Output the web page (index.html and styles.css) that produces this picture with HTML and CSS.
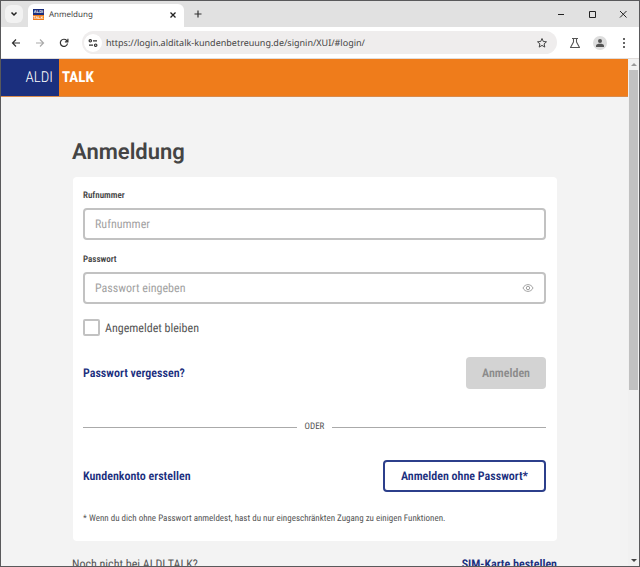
FILE: index.html
```html
<!DOCTYPE html>
<html lang="de">
<head>
<meta charset="utf-8">
<meta name="viewport" content="width=device-width, initial-scale=1">
<title>Anmeldung</title>
<link rel="stylesheet" href="styles.css">
</head>
<body>
<div class="window">
  <div class="tabstrip">
    <button class="tab-search" aria-label="Tabs durchsuchen"><svg width="8" height="8" viewBox="0 0 8 8"><path d="M1.5 2.5 4 5l2.500-2.500" fill="none" stroke="#222" stroke-width="1.500"/></svg></button>
    <div class="tab">
      <span class="favicon"><span class="favicon-top">ALDI</span><span class="favicon-bottom">TALK</span></span>
      <span class="tab-title">Anmeldung</span>
      <button class="icon-button" aria-label="Tab schließen"><svg width="8" height="8" viewBox="0 0 8 8"><path d="M1.500 1.500l5 5m0-5l-5 5" stroke="#222" stroke-width="1.300"/></svg></button>
    </div>
    <button class="icon-button new-tab" aria-label="Neuer Tab"><svg width="8" height="8" viewBox="0 0 8 8"><path d="M4 .5v7M.5 4h7" stroke="#333" stroke-width="1.200"/></svg></button>
    <div class="window-controls">
      <button class="icon-button" aria-label="Minimieren"><svg width="8" height="8" viewBox="0 0 8 8"><path d="M1 4.500h6" stroke="#222"/></svg></button>
      <button class="icon-button" aria-label="Maximieren"><svg width="8" height="8" viewBox="0 0 8 8"><path d="M1.500 1.500h6v6h-6z" fill="none" stroke="#222"/></svg></button>
      <button class="icon-button" aria-label="Schließen"><svg width="8" height="8" viewBox="0 0 8 8"><path d="M1 1l6.500 6.500M7.500 1L1 7.500" stroke="#222"/></svg></button>
    </div>
  </div>
  <div class="toolbar">
    <div class="nav">
      <button class="icon-button" aria-label="Zurück"><svg width="10" height="10" viewBox="0 0 10 10"><path d="M9 5H1.500M5 1.500L1.500 5 5 8.500" fill="none" stroke="#333" stroke-width="1.200"/></svg></button>
      <button class="icon-button" aria-label="Vor"><svg width="10" height="10" viewBox="0 0 10 10"><path d="M1 5h7.500M5 1.500L8.500 5 5 8.500" fill="none" stroke="#aaa" stroke-width="1.200"/></svg></button>
      <button class="icon-button" aria-label="Neu laden"><svg width="10" height="10" viewBox="0 0 10 10"><path d="M8.500 5.500A3.600 3.600 0 1 1 7.700 2.500L8.700 3.600M8.900.8v3H5.900" fill="none" stroke="#333" stroke-width="1.200"/></svg></button>
    </div>
    <div class="address">
      <button class="site-info" aria-label="Websiteinformationen"><svg width="10" height="10" viewBox="0 0 10 10"><g fill="none" stroke="#333" stroke-width="1.200"><circle cx="2.300" cy="2.800" r="1.200"/><path d="M5 2.800h4M1 7.200h4"/><circle cx="7.700" cy="7.200" r="1.200"/></g></svg></button>
      <input class="url" type="text" aria-label="Adresse" value="https://login.alditalk-kundenbetreuung.de/signin/XUI/#login/">
      <button class="icon-button" aria-label="Lesezeichen"><svg width="12" height="12" viewBox="0 0 12 12"><path d="M6 1.500l1.300 3 3.200.3-2.400 2.100.7 3.200L6 8.400l-2.800 1.700.7-3.200-2.400-2.100 3.200-.3z" fill="none" stroke="#444" stroke-linejoin="round"/></svg></button>
    </div>
    <div class="actions">
      <button class="icon-button" aria-label="Experimente"><svg width="12" height="12" viewBox="0 0 12 12"><path d="M3 1.500h6M4.500 1.500v3.500L1.500 10.500h9L7.500 5V1.500" fill="none" stroke="#555" stroke-width="1.100" stroke-linejoin="round"/></svg></button>
      <button class="icon-button" aria-label="Profil"><svg width="14" height="14" viewBox="0 0 14 14"><circle cx="7" cy="7" r="7" fill="#ddd"/><circle cx="7" cy="5" r="2" fill="#555"/><path d="M3 11V9.500C3 7.200 11 7.200 11 9.500V11z" fill="#555"/></svg></button>
      <button class="icon-button menu" aria-label="Menü"><svg width="4" height="12" viewBox="0 0 4 12"><g fill="#333"><circle cx="2" cy="2" r="1"/><circle cx="2" cy="6" r="1"/><circle cx="2" cy="10" r="1"/></g></svg></button>
    </div>
  </div>
  <div class="viewport">
    <div class="page">
      <header class="site-header">
        <a class="logo" href="#" aria-label="ALDI TALK"><span class="logo-aldi">ALDI</span><span class="logo-talk">TALK</span></a>
      </header>
      <main class="content">
        <h1>Anmeldung</h1>
        <form class="card">
          <div class="field">
            <label for="phone">Rufnummer</label>
            <div class="box"><input id="phone" type="text" placeholder="Rufnummer"></div>
          </div>
          <div class="field">
            <label for="password">Passwort</label>
            <div class="box"><input id="password" type="password" placeholder="Passwort eingeben"><button class="icon-button" type="button" aria-label="Passwort anzeigen"><svg width="12" height="8" viewBox="0 0 12 8"><g fill="none" stroke="#a2a2a2"><path d="M1 4c2-4.500 8-4.500 10 0-2 4.500-8 4.500-10 0z"/><circle cx="6" cy="4" r="1.700"/></g></svg></button></div>
          </div>
          <div class="remember"><input id="remember" type="checkbox"><label for="remember">Angemeldet bleiben</label></div>
          <div class="row login-row"><a href="#">Passwort vergessen?</a><button class="btn" type="submit" disabled>Anmelden</button></div>
          <div class="divider">ODER</div>
          <div class="row"><a href="#">Kundenkonto erstellen</a><button class="btn btn-outline" type="button">Anmelden ohne Passwort*</button></div>
          <p class="note">* Wenn du dich ohne Passwort anmeldest, hast du nur eingeschränkten Zugang zu einigen Funktionen.</p>
        </form>
        <div class="row signup"><span>Noch nicht bei ALDI TALK?</span><a href="#">SIM-Karte bestellen</a></div>
      </main>
    </div>
    <div class="scrollbar" aria-hidden="true"><span class="arrow-up"></span><div class="track"><div class="thumb"></div></div><span class="arrow-down"></span></div>
  </div>
</div>
</body>
</html>
```
FILE: styles.css
```css
* { box-sizing: border-box; }
body { margin: 0; font-family: "Roboto Condensed", Roboto, "Liberation Sans", sans-serif; font-size: 12px; line-height: 16px; color: #555; text-rendering: geometricPrecision; }
button, input { font: inherit; color: inherit; margin: 0; text-rendering: inherit; }
svg { display: block; }
a { color: #1b2f7e; font-weight: 600; text-decoration: none; }
.window { display: flex; flex-direction: column; height: 100vh; border: 1px solid #59595b; background: #fff; overflow: hidden; }
.icon-button { border: 0; padding: 0; background: none; flex: none; }

.tabstrip { flex: none; display: flex; align-items: center; height: 26px; padding: 0 12px 0 4px; background: #e1e1e1; }
.tab-search { display: grid; place-items: center; width: 18px; height: 18px; padding: 0; border: 0; border-radius: 6px; background: #f2f2f2; }
.tab { display: flex; align-items: center; align-self: flex-end; gap: 5px; width: 156px; height: 23px; margin-left: 5px; padding: 0 7px 2px 5px; border-radius: 6px 6px 0 0; background: #fff; }
.tab-title { flex: 1; font: 8px/12px "Noto Sans", sans-serif; color: #444; }
.favicon { display: flex; flex-direction: column; width: 11px; height: 11px; font: 700 4px/5px "Liberation Sans Narrow", "Liberation Sans", sans-serif; color: #fff; text-align: center; }
.favicon-top { height: 6px; background: #1b2f7e; }
.favicon-bottom { height: 5px; background: #ef7c1b; }
.new-tab { margin-left: 10px; }
.window-controls { display: flex; gap: 23px; margin-left: auto; }

.toolbar { flex: none; display: flex; align-items: center; height: 32px; padding: 0 13px 0 10px; border-bottom: 1px solid #e0dcda; }
.nav { display: flex; gap: 14px; }
.address { flex: 1; display: flex; align-items: center; height: 23px; margin-left: 13px; padding: 0 9px 0 2px; border-radius: 12px; background: #efeded; }
.site-info { display: grid; place-items: center; flex: none; width: 18px; height: 18px; padding: 0; border: 0; border-radius: 50%; background: #fff; }
.url { flex: 1; min-width: 0; height: 18px; padding: 0 4px; border: 0; background: none; font: 9px/16px "Noto Sans", sans-serif; color: #444; }
.actions { display: flex; align-items: center; gap: 12px; margin-left: 12px; }
.menu { margin-left: 3px; }

.viewport { flex: 1; min-height: 0; display: flex; }
.page { flex: 1; min-width: 0; overflow: hidden; background: #f3f3f3; }
.site-header { display: flex; height: 38px; border-bottom: 1px solid #d98b4d; background: #ef7c1b; }
.logo { display: flex; color: #fff; font-size: 15px; line-height: 37px; }
.logo-aldi { width: 58px; padding-right: 6px; background: #1b2f7e; font-weight: 300; text-align: right; }
.logo-talk { padding-left: 3px; font-weight: 700; }

.content { padding: 40px 71px 0; }
h1 { margin: 0 0 8px; font-family: Roboto, "Liberation Sans", sans-serif; font-size: 22px; line-height: 32px; font-weight: 600; color: #444; }
.card { margin-left: 1px; padding: 12px 11px 15px 10px; border-radius: 4px; background: #fff; }
.field { margin-bottom: 13px; }
.field label { display: block; margin-bottom: 5px; font-size: 9px; line-height: 14px; font-weight: 600; color: #444; }
.box { display: flex; align-items: center; height: 32px; padding: 0 10px; border: 2px solid #c2c2c2; border-radius: 4px; }
.box input { flex: 1; min-width: 0; padding: 0; border: 0; outline: 0; background: none; }
.box input::placeholder { color: #a2a2a2; opacity: 1; }
.remember { display: flex; align-items: center; gap: 5px; padding-top: 2px; }
.remember input { appearance: none; width: 17px; height: 17px; border: 2px solid #c2c2c2; border-radius: 2px; }
.row { display: flex; align-items: center; justify-content: space-between; }
.login-row { margin-top: 21px; }
.btn { height: 32px; padding: 0 16px; border: 0; border-radius: 4px; font-weight: 600; }
.btn:disabled { background: #d3d3d3; color: #8b8b8b; }
.btn-outline { border: 2px solid #2c3f8b; background: #fff; color: #1b2f7e; }
.divider { display: flex; align-items: center; gap: 8px; margin: 30px 0 25px; font-size: 9px; }
.divider::before, .divider::after { content: ""; flex: 1; height: 1px; background: #aaa; }
.note { margin: 20px 0 0; font-size: 9px; line-height: 14px; }
.signup { margin-top: 15px; }

.scrollbar { flex: none; display: flex; flex-direction: column; align-items: center; width: 11px; background: #f1f1f1; }
.track { flex: 1; width: 100%; padding: 0 1px; }
.thumb { height: 66%; background: #c1c1c1; }
.arrow-up, .arrow-down { margin: 4px 0; border: 3px solid transparent; }
.arrow-up { border-top: 0; border-bottom-color: #999; }
.arrow-down { border-bottom: 0; border-top-color: #444; }
```
